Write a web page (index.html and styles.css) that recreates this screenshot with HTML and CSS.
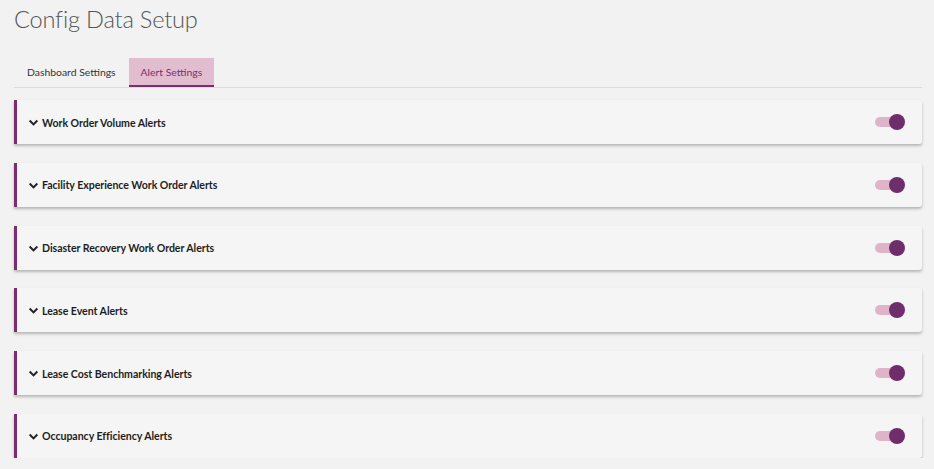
FILE: index.html
```html
<!DOCTYPE html>
<html>
<head>
<meta charset="utf-8">
<link rel="stylesheet" href="styles.css">
</head>
<body>
<div class="page">
  <h1 class="title">Config Data Setup</h1>
  <div class="tabs">
    <div class="tab">Dashboard Settings</div>
    <div class="tab active">Alert Settings</div>
  </div>
  <div class="list">
    <div class="card"><div class="head"><svg class="chev" viewBox="0 0 10 10"><path d="M1.5 3.2 L5 6.7 L8.5 3.2" /></svg><span class="label">Work Order Volume Alerts</span></div><div class="toggle"><span class="track"></span><span class="knob"></span></div></div>
    <div class="card"><div class="head"><svg class="chev" viewBox="0 0 10 10"><path d="M1.5 3.2 L5 6.7 L8.5 3.2" /></svg><span class="label">Facility Experience Work Order Alerts</span></div><div class="toggle"><span class="track"></span><span class="knob"></span></div></div>
    <div class="card"><div class="head"><svg class="chev" viewBox="0 0 10 10"><path d="M1.5 3.2 L5 6.7 L8.5 3.2" /></svg><span class="label">Disaster Recovery Work Order Alerts</span></div><div class="toggle"><span class="track"></span><span class="knob"></span></div></div>
    <div class="card"><div class="head"><svg class="chev" viewBox="0 0 10 10"><path d="M1.5 3.2 L5 6.7 L8.5 3.2" /></svg><span class="label">Lease Event Alerts</span></div><div class="toggle"><span class="track"></span><span class="knob"></span></div></div>
    <div class="card"><div class="head"><svg class="chev" viewBox="0 0 10 10"><path d="M1.5 3.2 L5 6.7 L8.5 3.2" /></svg><span class="label">Lease Cost Benchmarking Alerts</span></div><div class="toggle"><span class="track"></span><span class="knob"></span></div></div>
    <div class="card"><div class="head"><svg class="chev" viewBox="0 0 10 10"><path d="M1.5 3.2 L5 6.7 L8.5 3.2" /></svg><span class="label">Occupancy Efficiency Alerts</span></div><div class="toggle"><span class="track"></span><span class="knob"></span></div></div>
  </div>
</div>
</body>
</html>
```

FILE: styles.css
```css
html, body {
  margin: 0;
  padding: 0;
  background: #f2f2f2;
  font-family: Lato, "Open Sans", sans-serif;
  color: #222;
}
.page {
  padding: 0 12px 0 14px;
}
.title {
  margin: 0;
  padding-top: 4px;
  height: 54px;
  font-size: 23.6px;
  font-weight: 300;
  color: #555;
  line-height: 30px;
  letter-spacing: -0.2px;
}
.tabs {
  display: flex;
  border-bottom: 1px solid #dcdcdc;
  height: 29px;
}
.tab {
  height: 29px;
  box-sizing: border-box;
  padding: 0 13px 0 13px;
  font-size: 10.4px;
  line-height: 28px;
  color: #333;
}
.tab.active {
  background: #e2bdd0;
  color: #7b2e6e;
  border-bottom: 2px solid #7b2e6e;
  padding: 0 12px;
}
.list {
  display: flex;
  flex-direction: column;
  gap: 18.8px;
  padding-top: 12px;
}
.card {
  height: 44px;
  box-sizing: border-box;
  background: #f5f5f5;
  border-left: 3px solid #7b2e6e;
  border-radius: 0 3px 3px 0;
  box-shadow: 0 2px 3px rgba(0,0,0,0.25);
  display: flex;
  align-items: center;
  justify-content: space-between;
  padding: 0 17px 0 11px;
}
.head {
  display: flex;
  align-items: center;
  gap: 3px;
  padding-top: 1px;
}
.chev {
  width: 11px;
  height: 11px;
  fill: none;
  stroke: #222;
  stroke-width: 1.8;
}
.label {
  font-size: 10.6px;
  font-weight: 700;
  color: #1e1e1e;
  letter-spacing: -0.05px;
}
.toggle {
  position: relative;
  width: 30px;
  height: 16px;
}
.track {
  position: absolute;
  left: 0;
  top: 3px;
  width: 26px;
  height: 10px;
  border-radius: 5px;
  background: #e0b4c8;
}
.knob {
  position: absolute;
  right: 0;
  top: 0;
  width: 16px;
  height: 16px;
  border-radius: 50%;
  background: #6f2d6b;
}
```
